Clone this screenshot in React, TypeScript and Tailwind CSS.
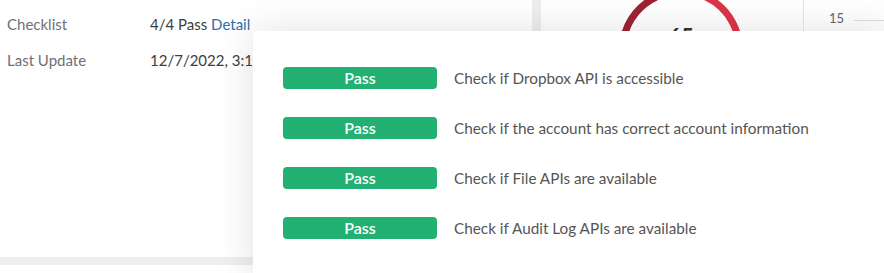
import React from "react";

const rows = [
  "Check if Dropbox API is accessible",
  "Check if the account has correct account information",
  "Check if File APIs are available",
  "Check if Audit Log APIs are available",
];

function Donut() {
  const cx = 140;
  const cy = 50;
  const r = 58.5;
  const pt = (deg: number) => {
    const a = ((deg - 90) * Math.PI) / 180;
    return `${cx + r * Math.cos(a)} ${cy + r * Math.sin(a)}`;
  };
  const arc = (a0: number, a1: number) =>
    `M ${pt(a0)} A ${r} ${r} 0 ${a1 - a0 > 180 ? 1 : 0} 1 ${pt(a1)}`;
  return (
    <svg width="262" height="120" className="absolute left-0 top-0">
      <path d={arc(225, 335)} stroke="#9e2233" strokeWidth="7" fill="none" />
      <path d={arc(336, 348)} stroke="#f0982a" strokeWidth="7" fill="none" />
      <path d={arc(349, 495)} stroke="#dc3545" strokeWidth="7" fill="none" />
      <text x="140" y="45" textAnchor="middle" fontSize="22" fontWeight="700" fill="#333" fontFamily="Lato, sans-serif">65</text>
    </svg>
  );
}

export default function App() {
  return (
    <div className="relative w-[884px] h-[273px] overflow-hidden bg-[#eeeeee] font-['Lato','Liberation_Sans',sans-serif]">
      <div className="flex flex-col gap-[8px] h-full">
        <div className="flex gap-[9px] h-[257px] shrink-0">
          <div className="w-[532px] shrink-0 bg-white pt-[14px] pl-[7px] text-[15px]">
            <div className="flex h-[20px] items-center">
              <span className="w-[143px] text-[#6f6f76]">Checklist</span>
              <span className="text-[#3d3d3d]">4/4 Pass <span className="text-[#2d6fa8]">Detail</span></span>
            </div>
            <div className="flex h-[20px] items-center mt-[16px]">
              <span className="w-[143px] text-[#6f6f76]">Last Update</span>
              <span className="text-[#3d3d3d] whitespace-nowrap">12/7/2022, 3:18:42 PM</span>
            </div>
          </div>
          <div className="flex-1 min-w-0 bg-white relative flex">
            <div className="w-[262px] shrink-0 relative">
              <Donut />
            </div>
            <div className="flex-1 min-w-0 border-l border-[#e6e6e6] flex">
              <div className="flex items-start pt-[9px] pl-[25px] gap-[10px]">
                <span className="text-[13px] text-[#666]">15</span>
                <div className="w-[60px] h-px bg-[#dcdcdc] mt-[11px]"></div>
              </div>
            </div>
          </div>
        </div>
        <div className="flex-1 bg-white"></div>
      </div>

      <div className="absolute left-[253px] top-[31px] right-[-10px] bottom-[-10px] bg-white rounded-[4px] shadow-[0_0_40px_rgba(0,0,0,0.12)] pt-[36px] pl-[30px]">
        <div className="flex flex-col gap-[28px]">
          {rows.map((t) => (
            <div key={t} className="flex items-center h-[22px]">
              <div className="w-[154px] h-[22px] shrink-0 rounded-[4px] bg-[#22b073] text-white text-[16px] font-semibold flex items-center justify-center">
                Pass
              </div>
              <span className="ml-[17px] text-[15.3px] text-[#555555] whitespace-nowrap">{t}</span>
            </div>
          ))}
        </div>
      </div>
    </div>
  );
}
